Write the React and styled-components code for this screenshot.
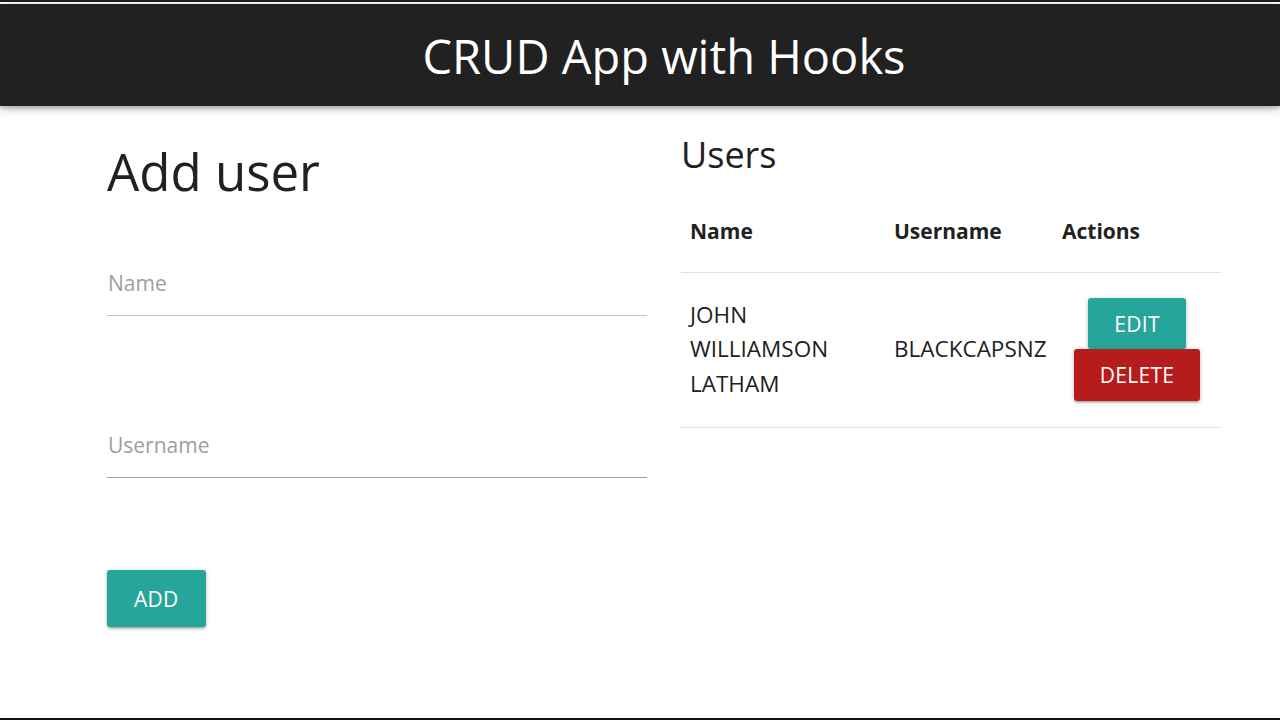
import React from "react";
import styled, { createGlobalStyle } from "styled-components";

const GlobalStyle = createGlobalStyle`
  * { box-sizing: border-box; }
  html, body { margin: 0; padding: 0; }
  body {
    font-family: "Open Sans", "Noto Sans", sans-serif;
    color: rgba(0, 0, 0, 0.87);
    background: #fff;
  }
`;

const Page = styled.div`
  height: 720px;
  display: flex;
  flex-direction: column;
  border-top: 2px solid #1e1e1e;
  border-bottom: 2px solid #111;
  padding-top: 2px;
  overflow: hidden;
`;

const Header = styled.header`
  height: 102px;
  flex: none;
  background: #212121;
  display: flex;
  align-items: center;
  justify-content: center;
  padding-left: 48px;
  box-shadow: 0 2px 5px rgba(0, 0, 0, 0.3), 0 4px 10px rgba(0, 0, 0, 0.12);
  position: relative;
  z-index: 1;
`;

const Title = styled.h1`
  margin: 0;
  color: #fff;
  font-weight: 400;
  font-size: 47px;
  line-height: 1;
  padding-top: 2px;
`;

const Main = styled.main`
  display: grid;
  grid-template-columns: 540px 540px;
  column-gap: 34px;
  padding-left: 107px;
  align-items: start;
`;

const Column = styled.section`
  display: flex;
  flex-direction: column;
`;

const BigHeading = styled.h2`
  margin: ${(p) => p.$margin};
  font-weight: 400;
  font-size: ${(p) => p.$size}px;
  line-height: 1;
  color: #212121;
`;

const Field = styled.div`
  position: relative;
  height: 65px;
  margin-bottom: ${(p) => p.$gap}px;
`;

const Input = styled.input`
  width: 100%;
  height: 65px;
  border: none;
  border-bottom: 1px solid ${(p) => p.$line};
  background: transparent;
  outline: none;
  font: inherit;
  font-size: 21px;
  padding: 0;
`;

const Label = styled.label`
  position: absolute;
  left: 1px;
  top: 50%;
  transform: translateY(-50%);
  margin-top: -1px;
  font-size: 21px;
  color: #9e9e9e;
  pointer-events: none;
`;

const Button = styled.button`
  border: none;
  border-radius: 3px;
  background: ${(p) => p.$bg};
  color: #fff;
  font-family: inherit;
  font-size: 21px;
  letter-spacing: 0.3px;
  text-transform: uppercase;
  height: ${(p) => p.$h}px;
  padding: 0 ${(p) => p.$px}px;
  box-shadow: 0 2px 2px 0 rgba(0, 0, 0, 0.14), 0 3px 1px -2px rgba(0, 0, 0, 0.12),
    0 1px 5px 0 rgba(0, 0, 0, 0.2);
  cursor: pointer;
  display: inline-flex;
  align-items: center;
  justify-content: center;
`;

const AddButton = styled(Button)`
  align-self: flex-start;
`;

const Table = styled.table`
  width: 540px;
  border-collapse: collapse;
  table-layout: fixed;
`;

const HeadCell = styled.th`
  text-align: left;
  font-weight: 700;
  font-size: 21px;
  padding: 0 9px;
  height: 82px;
  vertical-align: middle;
  color: #212121;
`;

const HeadRow = styled.tr`
  border-bottom: 1px solid #e0e0e0;
`;

const BodyRow = styled.tr`
  border-bottom: 1px solid #e0e0e0;
`;

const Cell = styled.td`
  padding: 0 9px;
  height: 155px;
  vertical-align: middle;
  font-size: 22.5px;
  line-height: 34.5px;
  text-align: ${(p) => (p.$center ? "center" : "left")};
  color: #212121;
`;

const ActionStack = styled.div`
  display: flex;
  flex-direction: column;
  align-items: center;
`;

const users = [
  { id: 1, name: "John Williamson Latham", username: "blackcapsnz" },
];

export default function App() {
  return (
    <>
      <GlobalStyle />
      <Page>
        <Header>
          <Title>CRUD App with Hooks</Title>
        </Header>
        <Main>
          <Column>
            <BigHeading $size={51} $margin="40px 0 54px 0">
              Add user
            </BigHeading>
            <Field $gap={97}>
              <Input id="name" $line="#c4c4c4" />
              <Label htmlFor="name">Name</Label>
            </Field>
            <Field $gap={92}>
              <Input id="username" $line="#9e9e9e" />
              <Label htmlFor="username">Username</Label>
            </Field>
            <AddButton $bg="#26a69a" $h={57} $px={27}>
              Add
            </AddButton>
          </Column>
          <Column>
            <BigHeading $size={36} $margin="31px 0 17px 0">
              Users
            </BigHeading>
            <Table>
              <colgroup>
                <col style={{ width: 204 }} />
                <col style={{ width: 168 }} />
                <col style={{ width: 168 }} />
              </colgroup>
              <thead>
                <HeadRow>
                  <HeadCell>Name</HeadCell>
                  <HeadCell>Username</HeadCell>
                  <HeadCell>Actions</HeadCell>
                </HeadRow>
              </thead>
              <tbody>
                {users.map((u) => (
                  <BodyRow key={u.id}>
                    <Cell>{u.name.toUpperCase()}</Cell>
                    <Cell>{u.username.toUpperCase()}</Cell>
                    <Cell $center>
                      <ActionStack>
                        <Button $bg="#26a69a" $h={51} $px={26}>
                          Edit
                        </Button>
                        <Button $bg="#b71c1c" $h={52} $px={26}>
                          Delete
                        </Button>
                      </ActionStack>
                    </Cell>
                  </BodyRow>
                ))}
              </tbody>
            </Table>
          </Column>
        </Main>
      </Page>
    </>
  );
}
